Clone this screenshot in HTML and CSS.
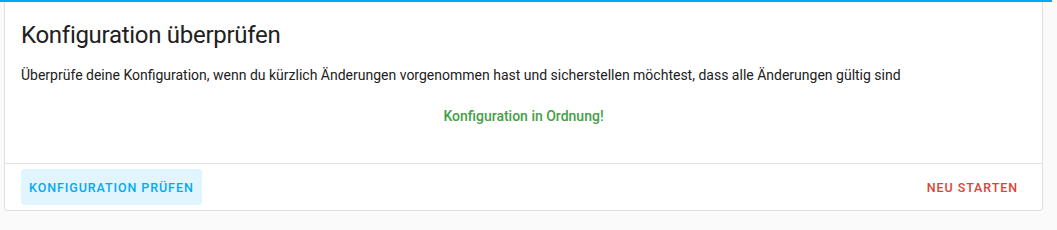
FILE: index.html
```html
<!DOCTYPE html>
<html lang="de">
<head>
<meta charset="utf-8">
<link rel="stylesheet" href="styles.css">
</head>
<body>
<div class="topbar"></div>
<div class="card">
  <div class="card-header">Konfiguration überprüfen</div>
  <div class="card-content">
    <p class="desc">Überprüfe deine Konfiguration, wenn du kürzlich Änderungen vorgenommen hast und sicherstellen möchtest, dass alle Änderungen gültig sind</p>
    <div class="result">Konfiguration in Ordnung!</div>
  </div>
  <div class="card-actions">
    <button class="btn btn-check">Konfiguration prüfen</button>
    <button class="btn btn-restart">Neu starten</button>
  </div>
</div>
</body>
</html>
```
FILE: styles.css
```css
html, body {
  margin: 0;
  padding: 0;
  background: #fafafa;
  font-family: Roboto, "Noto Sans", sans-serif;
  color: #212121;
}
.topbar {
  width: 1052px;
  height: 2px;
  background: #03a9f4;
}
.card {
  box-sizing: border-box;
  width: 1039px;
  margin-left: 4px;
  background: #fff;
  border: 1px solid #e0e0e0;
  border-top: none;
  border-radius: 0 0 4px 4px;
}
.card-header {
  padding: 17px 16px 0 16px;
  font-size: 24px;
  line-height: 32px;
  letter-spacing: -0.012em;
  font-weight: 400;
}
.card-content {
  padding: 14px 16px 37px 16px;
}
.desc {
  margin: 0;
  font-size: 14px;
  line-height: 20px;
}
.result {
  margin-top: 21px;
  text-align: center;
  font-size: 14px;
  line-height: 20px;
  font-weight: 500;
  color: #43a047;
}
.card-actions {
  border-top: 1px solid #e0e0e0;
  padding: 5px 16px 5px 16px;
  display: flex;
  justify-content: space-between;
  align-items: center;
}
.btn {
  font-family: Roboto, "Noto Sans", sans-serif;
  height: 36px;
  padding: 0 8px;
  border: none;
  border-radius: 4px;
  font-size: 12.5px;
  font-weight: 500;
  letter-spacing: 0.92px;
  text-transform: uppercase;
  background: transparent;
  cursor: pointer;
}
.btn-check {
  background: #e1f5fe;
  color: #03a9f4;
}
.btn-restart {
  color: #db4437;
}
```
